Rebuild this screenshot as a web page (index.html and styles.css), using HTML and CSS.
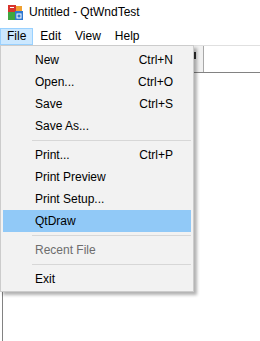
FILE: index.html
```html
<!DOCTYPE html>
<html>
<head>
    <title>Untitled - QtWndTest</title>
    <link rel="stylesheet" href="styles.css">
</head>
<body>
    <div id="window">
        <div class="titlebar">
            <svg class="app-icon" width="17" height="17" viewBox="0 0 17 17">
                <rect x="1" y="1" width="8" height="8" fill="#d8342c"/>
                <rect x="9" y="2" width="6" height="6" fill="#f0a030"/>
                <rect x="1" y="8" width="8" height="8" fill="#3fa640"/>
                <rect x="8" y="7" width="8" height="9" fill="#2f78d0"/>
                <rect x="3" y="3" width="4" height="1" fill="#fff"/>
                <rect x="10" y="10" width="4" height="4" fill="none" stroke="#fff" stroke-width="1"/>
            </svg>
            <span class="title-text">Untitled - QtWndTest</span>
        </div>

        <div class="menubar">
            <span class="menu-item open">File</span>
            <span class="menu-item">Edit</span>
            <span class="menu-item">View</span>
            <span class="menu-item">Help</span>
        </div>

        <div class="toolbar">
            <span class="grip"></span>
            <div class="combo"></div>
        </div>

        <div class="view"></div>

        <!-- File popup menu -->
        <div class="popup">
            <div class="row"><span>New</span><span class="key">Ctrl+N</span></div>
            <div class="row"><span>Open...</span><span class="key">Ctrl+O</span></div>
            <div class="row"><span>Save</span><span class="key">Ctrl+S</span></div>
            <div class="row"><span>Save As...</span></div>
            <div class="sep"></div>
            <div class="row"><span>Print...</span><span class="key">Ctrl+P</span></div>
            <div class="row"><span>Print Preview</span></div>
            <div class="row"><span>Print Setup...</span></div>
            <div class="row active"><span>QtDraw</span></div>
            <div class="sep"></div>
            <div class="row disabled"><span>Recent File</span></div>
            <div class="sep"></div>
            <div class="row"><span>Exit</span></div>
        </div>
    </div>
</body>
</html>
```

FILE: styles.css
```css
body {
    margin: 0;
    padding: 0;
    background: #fff;
    font-family: "Segoe UI", "Liberation Sans", Arial, sans-serif;
    font-size: 12px;
    color: #000;
}

#window {
    position: relative;
    width: 260px;
    height: 341px;
    overflow: hidden;
    display: flex;
    flex-direction: column;
    background: #fff;
}

.titlebar {
    height: 27px;
    display: flex;
    align-items: center;
    padding-left: 7px;
    box-sizing: border-box;
    padding-bottom: 3px;
}

.app-icon {
    margin-right: 5px;
}

.menubar {
    height: 18px;
    display: flex;
    padding-top: 1px;
    box-sizing: border-box;
}

.menu-item {
    padding: 0 6px;
    line-height: 15px;
    border: 1px solid transparent;
}

.menu-item.open {
    background: #cce8ff;
    border-color: #99d1ff;
}

.toolbar {
    height: 26px;
    background: #f0f0f0;
    border-top: 1px solid #e0e0e0;
    display: flex;
    justify-content: flex-end;
    align-items: flex-start;
}

.grip {
    width: 2px;
    height: 7px;
    margin-top: 6px;
    margin-right: 7px;
    background: #303030;
}

.combo {
    width: 56px;
    height: 26px;
    background: #fff;
    border-left: 1px solid #a8a8a8;
}

.view {
    flex: 1;
    margin-left: 2px;
    border-top: 1px solid #828282;
    border-left: 1px solid #828282;
    background: #fff;
}

/* popup menu lies over the window */
.popup {
    position: absolute;
    top: 45px;
    left: 0;
    width: 188px;
    padding: 3px 2px 1px 2px;
    background: #f2f2f2;
    border: 1px solid #cccccc;
    box-shadow: 3px 3px 3px rgba(0, 0, 0, 0.3);
}

.row {
    height: 22px;
    display: flex;
    align-items: center;
    justify-content: space-between;
    padding: 0 18px 0 32px;
}

.row.active {
    background: #91c9f7;
}

.row.disabled {
    color: #6d6d6d;
}

.sep {
    height: 1px;
    margin: 3px 0 3px 29px;
    background: #d7d7d7;
}
```
